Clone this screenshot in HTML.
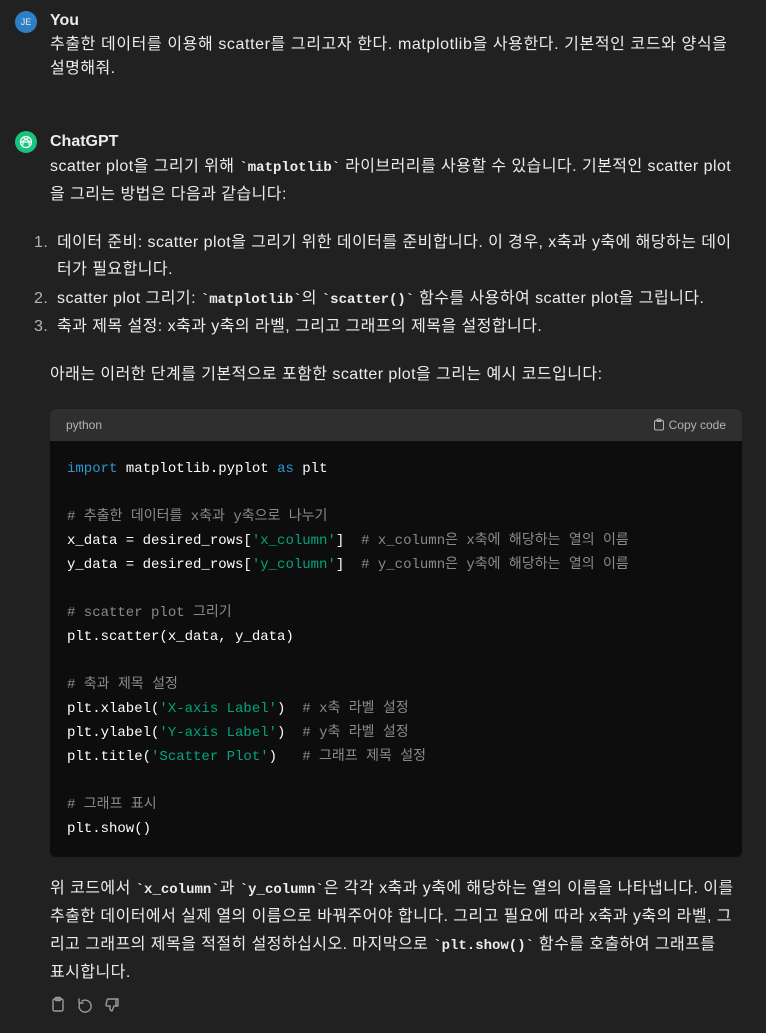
<!DOCTYPE html>
<html><head><meta charset="utf-8"><style>
body{margin:0;background:#212121;color:#ececec;font-family:"Liberation Sans","Noto Sans CJK KR",sans-serif;font-size:16px;width:766px;height:1033px;overflow:hidden;position:relative}
.a{position:absolute}
.l{position:absolute;left:50px;white-space:nowrap;line-height:20px;letter-spacing:0.45px}
.b{font-weight:bold;letter-spacing:0}
.ic{font-family:"Liberation Mono",monospace;font-weight:bold;font-size:14px;letter-spacing:0}
.code{position:absolute;left:50px;top:409px;width:692px;height:448px;background:#0d0d0d;border-radius:6px;overflow:hidden}
.hd{height:32px;background:#2f2f2f;color:#b4b4b4;font-size:12px;line-height:32px;padding:0 16px;position:relative}
.cl{position:absolute;left:17px;white-space:pre;font-family:"Liberation Mono","Noto Sans CJK KR",monospace;font-size:14px;line-height:20px;color:#fff}
.k{color:#2e95d3}.s{color:#00a67d}.c{color:#8a8a8a}
</style></head><body>
<div class="a" style="left:15px;top:11px;width:22px;height:22px;border-radius:50%;background:#2f80c2;color:#dce9f5;font-size:9px;line-height:22px;text-align:center">JE</div>
<div class="l b" style="top:11px">You</div>
<div class="l" style="top:35px;letter-spacing:0.6px">추출한 데이터를 이용해 scatter를 그리고자 한다. matplotlib을 사용한다. 기본적인 코드와 양식을</div>
<div class="l" style="top:59px">설명해줘.</div>

<div class="a" style="left:15px;top:131px;width:22px;height:22px;border-radius:50%;background:#19c37d"><svg width="22" height="22" viewBox="0 0 22 22"><g fill="none" stroke="#fff" stroke-width="1.2"><circle cx="11" cy="11" r="5.5"/><path d="M8 6.5l6 3.5v4M14 6.5l-6 3.5v4M6 11h10"/></g></svg></div>
<div class="l b" style="top:132px">ChatGPT</div>
<div class="l" style="top:157px">scatter plot을 그리기 위해 <span class="ic">`matplotlib`</span> 라이브러리를 사용할 수 있습니다. 기본적인 scatter plot</div>
<div class="l" style="top:185px">을 그리는 방법은 다음과 같습니다:</div>

<div class="l" style="left:34px;top:233px;color:#b4b4b4">1.</div>
<div class="l" style="left:57px;top:233px">데이터 준비: scatter plot을 그리기 위한 데이터를 준비합니다. 이 경우, x축과 y축에 해당하는 데이</div>
<div class="l" style="left:57px;top:260px">터가 필요합니다.</div>
<div class="l" style="left:34px;top:289px;color:#b4b4b4">2.</div>
<div class="l" style="left:57px;top:289px">scatter plot 그리기: <span class="ic">`matplotlib`</span>의 <span class="ic">`scatter()`</span> 함수를 사용하여 scatter plot을 그립니다.</div>
<div class="l" style="left:34px;top:317px;color:#b4b4b4">3.</div>
<div class="l" style="left:57px;top:317px">축과 제목 설정: x축과 y축의 라벨, 그리고 그래프의 제목을 설정합니다.</div>
<div class="l" style="top:365px">아래는 이러한 단계를 기본적으로 포함한 scatter plot을 그리는 예시 코드입니다:</div>

<div class="code">
<div class="hd">python<span style="position:absolute;right:16px;top:0">
<svg width="12" height="13" viewBox="0 0 12 13" style="vertical-align:-2px;margin-right:4px"><rect x="1.5" y="2.5" width="9" height="9.5" rx="1.5" fill="none" stroke="#b4b4b4"/><rect x="4" y="1" width="4" height="2.5" rx=".5" fill="none" stroke="#b4b4b4"/></svg>Copy code</span></div>
<div class="cl" style="top:50px"><span class="k">import</span> matplotlib.pyplot <span class="k">as</span> plt</div>
<div class="cl c" style="top:98px"># 추출한 데이터를 x축과 y축으로 나누기</div>
<div class="cl" style="top:122px">x_data = desired_rows[<span class="s">'x_column'</span>]  <span class="c"># x_column은 x축에 해당하는 열의 이름</span></div>
<div class="cl" style="top:146px">y_data = desired_rows[<span class="s">'y_column'</span>]  <span class="c"># y_column은 y축에 해당하는 열의 이름</span></div>
<div class="cl c" style="top:194px"># scatter plot 그리기</div>
<div class="cl" style="top:218px">plt.scatter(x_data, y_data)</div>
<div class="cl c" style="top:266px"># 축과 제목 설정</div>
<div class="cl" style="top:290px">plt.xlabel(<span class="s">'X-axis Label'</span>)  <span class="c"># x축 라벨 설정</span></div>
<div class="cl" style="top:314px">plt.ylabel(<span class="s">'Y-axis Label'</span>)  <span class="c"># y축 라벨 설정</span></div>
<div class="cl" style="top:338px">plt.title(<span class="s">'Scatter Plot'</span>)   <span class="c"># 그래프 제목 설정</span></div>
<div class="cl c" style="top:386px"># 그래프 표시</div>
<div class="cl" style="top:410px">plt.show()</div>
</div>

<div class="l" style="top:879px">위 코드에서 <span class="ic">`x_column`</span>과 <span class="ic">`y_column`</span>은 각각 x축과 y축에 해당하는 열의 이름을 나타냅니다. 이를</div>
<div class="l" style="top:907px">추출한 데이터에서 실제 열의 이름으로 바꿔주어야 합니다. 그리고 필요에 따라 x축과 y축의 라벨, 그</div>
<div class="l" style="top:935px">리고 그래프의 제목을 적절히 설정하십시오. 마지막으로 <span class="ic">`plt.show()`</span> 함수를 호출하여 그래프를</div>
<div class="l" style="top:963px">표시합니다.</div>

<svg class="a" style="left:50px;top:996px" width="80" height="18" viewBox="0 0 80 18"><g fill="none" stroke="#9b9b9b" stroke-width="1.4" stroke-linecap="round" stroke-linejoin="round">
<rect x="3" y="3" width="10" height="12" rx="1.5"/><rect x="5.5" y="1.5" width="5" height="3" rx=".8"/>
<path d="M32 5a6 6 0 1 1-2.5 3M29 3v4h4"/>
<path d="M60 3h6v7h-2l-2 5c-1 0-2-1-2-2v-3h-3a1 1 0 0 1-1-1.2l1-4.5a1.5 1.5 0 0 1 1.5-1.3zM66 3h2v7h-2"/>
</g></svg>
</body></html>
